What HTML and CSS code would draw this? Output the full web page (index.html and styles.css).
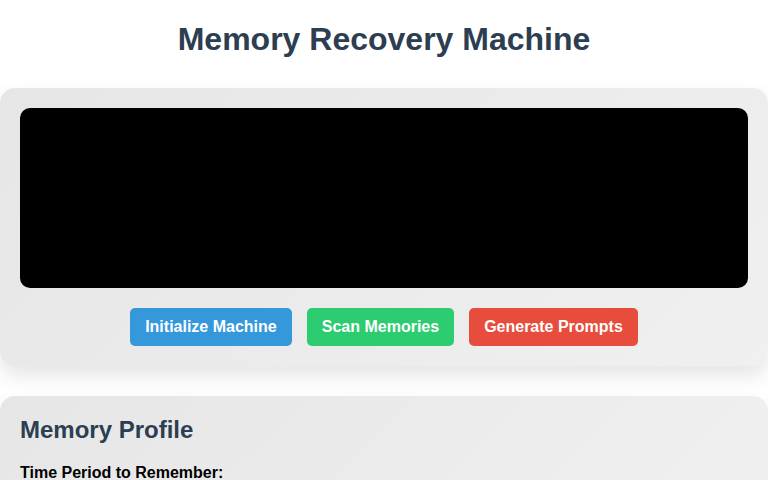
FILE: index.html
```html
<!DOCTYPE html>
<html lang="en">
<head>
  <meta charset="UTF-8" />
  <title>Memory Recovery Machine</title>
  <link rel="stylesheet" href="styles.css">
</head>
<body>

  <h1>Memory Recovery Machine</h1>

  <div class="machine">
    <canvas class="screen" width="728" height="180"></canvas>
    <div class="controls">
      <button class="btn btn-init">Initialize Machine</button>
      <button class="btn btn-scan">Scan Memories</button>
      <button class="btn btn-prompts">Generate Prompts</button>
    </div>
  </div>

  <!-- Profile form -->
  <div class="machine profile">
    <h2>Memory Profile</h2>
    <label class="field-label" for="period">Time Period to Remember:</label>
  </div>

</body>
</html>
```

FILE: styles.css
```css
body {
  font-family: 'Liberation Sans', Arial, sans-serif;
  margin: 0;
  background: #fff;
  color: #000;
}

h1 {
  color: #2c3e50;
  text-align: center;
  font-size: 32px;
  margin: 21px 0 30px;
}

.machine {
  background: linear-gradient(135deg, #e6e6e6, #f0f0f0);
  border-radius: 15px;
  box-shadow: 0 10px 20px rgba(0, 0, 0, 0.1);
  padding: 20px;
  margin-bottom: 30px;
}

.screen {
  display: block;
  width: 100%;
  height: 180px;
  background: #000;
  border-radius: 10px;
}

.controls {
  display: flex;
  justify-content: center;
  gap: 15px;
  margin-top: 20px;
}

.btn {
  font-family: inherit;
  font-size: 16px;
  font-weight: bold;
  color: #fff;
  border: none;
  border-radius: 5px;
  padding: 10px 15px;
  height: 38px;
  cursor: pointer;
}

.btn-init { background: #3498db; }
.btn-scan { background: #2ecc71; }
.btn-prompts { background: #e74c3c; }

.profile h2 {
  color: #2c3e50;
  font-size: 24px;
  margin: 0 0 20px;
}

.field-label {
  display: block;
  font-weight: bold;
  font-size: 16px;
}
```
